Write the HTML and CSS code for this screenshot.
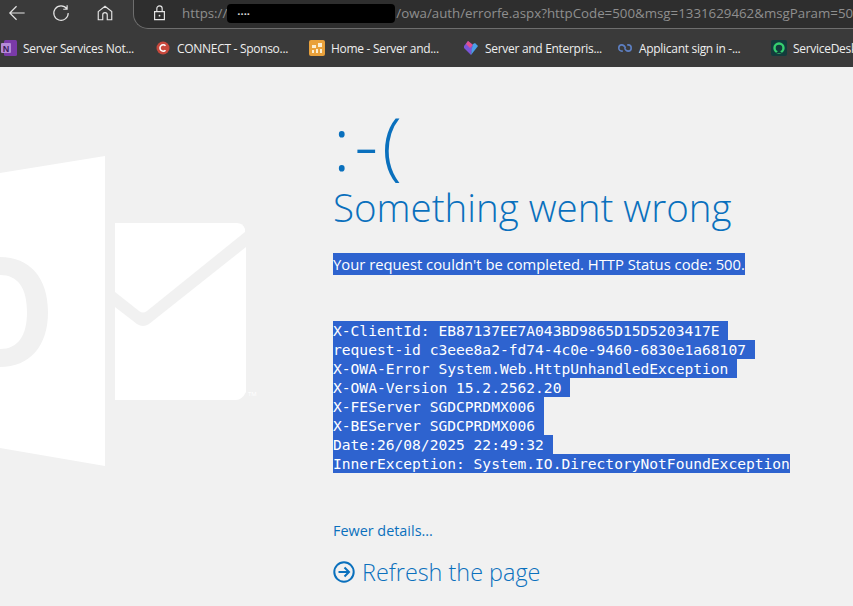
FILE: index.html
```html
<!DOCTYPE html>
<html lang="en">
<head>
<meta charset="utf-8">
<title>Something went wrong</title>
<link rel="stylesheet" href="styles.css">
</head>
<body>
<header class="chrome">
  <div class="toolbar">
    <div class="nav">
      <svg class="nav-icon" viewBox="0 0 20 20"><path d="M18.5 10H2M9.5 2.5 2 10l7.500 7.500"/></svg>
      <svg class="nav-icon" viewBox="0 0 20 20"><path d="M16.500 5.500A8 8 0 1 0 18 10M12.500 5.800h4.300V1.500"/></svg>
      <svg class="nav-icon" viewBox="0 0 20 20"><path d="M2.500 8.500 10 2.500l7.500 6v9h-5V12a2.500 2.500 0 0 0-5 0v5.500h-5z"/></svg>
    </div>
    <div class="address">
      <svg class="lock" viewBox="0 0 14 18"><path d="M1.500 7.500h11v9h-11zM4 7.500V4a3 3 0 0 1 6 0v3.500"/><circle cx="7" cy="12" r="1"/></svg>
      <span class="url-start">https://</span>
      <span class="redact">....</span>
      <span class="url-end">/owa/auth/errorfe.aspx?httpCode=500&amp;msg=1331629462&amp;msgParam=50</span>
    </div>
  </div>
  <nav class="bookmarks">
    <a class="bm"><svg class="fav" viewBox="0 0 16 16"><rect x="3" width="13" height="16" rx="1.500" fill="#7a3aa8"/><rect y="3" width="10" height="10" rx="1" fill="#b48ad6"/><text x="1.800" y="11.500" class="fav-n">N</text></svg><span>Server Services Not...</span></a>
    <a class="bm"><svg class="fav" viewBox="0 0 16 16"><circle cx="8" cy="8" r="6.500" fill="#c8483c"/><path d="M10.500 5.800a3.200 3.200 0 1 0 0 4.400" fill="none" stroke="#fff" stroke-width="1.600"/></svg><span>CONNECT - Sponso...</span></a>
    <a class="bm"><svg class="fav" viewBox="0 0 16 16"><rect width="16" height="16" rx="2" fill="#e9a13b"/><path d="M3 5h4v3H3zM9 3h4v4H9zM3 10h2v3H3zM7 9h2v4H7zM11 9h2v4h-2z" fill="#fbeed2"/></svg><span>Home - Server and...</span></a>
    <a class="bm"><svg class="fav" viewBox="0 0 16 16"><path d="M1 6 5 1l5 4-2 10-7-7z" fill="#7a55d8"/><path d="M5 1l5 4-3 3-4-4z" fill="#e0508c"/><path d="M10 4l2-1 3 3-7 9 1-7z" fill="#4aa0e8"/></svg><span>Server and Enterpris...</span></a>
    <a class="bm"><svg class="fav" viewBox="0 0 18 16"><path d="M6.500 11.500H5.500a3.500 3.500 0 0 1 0-7c2 0 3 1 4 3.500M11.500 4.500h1a3.500 3.500 0 0 1 0 7c-2 0-3-1-4-3.500" fill="none" stroke="#5d7fc2" stroke-width="1.800"/></svg><span>Applicant sign in -...</span></a>
    <a class="bm"><svg class="fav" viewBox="0 0 16 16"><rect width="16" height="16" rx="2" fill="#123c3c"/><circle cx="8" cy="8" r="4.500" fill="none" stroke="#35d06f" stroke-width="2.400"/><path d="M5 13h6l-3-3z" fill="#123c3c"/></svg><span>ServiceDesk</span></a>
  </nav>
</header>
<main class="page">
  <svg class="logo" viewBox="0 0 262 310" aria-hidden="true">
    <path fill="#fff" fill-rule="evenodd" d="M0 17 105 0V310L0 292ZM0 101V211C30 211 48 190 48 156 48 122 30 101 0 101ZM0 119C18 119 27 132 27 156 27 180 18 193 0 193Z"/>
    <path fill="#fff" d="M115 67H237Q243 67 245 73V76L147 155Q143 158 139 155L115 136Z"/>
    <path fill="#fff" d="M115 151 137 168Q143 172 149 168L246 91V236Q242 244 236 244H115Z"/>
  </svg>
  <span class="tm">TM</span>
  <section class="content">
    <div class="sad">:-(</div>
    <h1 class="title">Something went wrong</h1>
    <p class="message"><span class="sel">Your request couldn't be completed. HTTP Status code: 500.</span></p>
    <pre class="details"><span class="sel">X-ClientId: EB87137EE7A043BD9865D15D5203417E </span>
<span class="sel">request-id c3eee8a2-fd74-4c0e-9460-6830e1a68107 </span>
<span class="sel">X-OWA-Error System.Web.HttpUnhandledException </span>
<span class="sel">X-OWA-Version 15.2.2562.20 </span>
<span class="sel">X-FEServer SGDCPRDMX006 </span>
<span class="sel">X-BEServer SGDCPRDMX006 </span>
<span class="sel">Date:26/08/2025 22:49:32 </span>
<span class="sel">InnerException: System.IO.DirectoryNotFoundException</span></pre>
    <a class="fewer">Fewer details...</a>
    <a class="refresh"><svg class="refresh-icon" viewBox="0 0 22 22"><circle cx="11" cy="11" r="9.700"/><path d="M5.500 11h10M11.500 6.500 16 11l-4.500 4.500"/></svg><span>Refresh the page</span></a>
  </section>
</main>
</body>
</html>
```
FILE: styles.css
```css
* { box-sizing: border-box; }
html, body { margin: 0; height: 100%; }
body {
  width: 853px;
  height: 606px;
  overflow: hidden;
  background: #f1f1f1;
  font-family: "Open Sans", "Noto Sans", sans-serif;
  display: flex;
  flex-direction: column;
}
.chrome { background: #3a3a3a; height: 67px; flex: none; overflow: hidden; }
.toolbar { display: flex; height: 29px; }
.nav { display: flex; width: 133px; flex: none; padding-left: 8px; gap: 26px; align-items: flex-start; padding-top: 4px; }
.nav-icon { width: 18px; height: 18px; fill: none; stroke: #e4e4e4; stroke-width: 1.300; flex: none; }
.address {
  flex: 1;
  display: flex;
  align-items: center;
  height: 29px;
  padding: 0 0 2px 19px;
  background: #2e2e2e;
  border: 1px solid #6e6e6e;
  border-width: 0 0 1px 1px;
  border-radius: 0 0 0 15px;
  font-size: 13.300px;
  white-space: nowrap;
  overflow: hidden;
}
.lock { width: 13px; height: 16px; fill: none; stroke: #e8e8e8; stroke-width: 1.300; flex: none; margin-right: 16px; }
.lock circle { fill: #e8e8e8; stroke: none; }
.url-start, .url-end { color: #8f8f8f; }
.redact {
  width: 168px;
  height: 19px;
  background: #000;
  border-radius: 4px;
  color: #ddd;
  font-size: 11px;
  font-weight: 700;
  line-height: 13px;
  padding-left: 10px;
  flex: none;
}
.url-end { margin-left: 1px; }
.bookmarks { display: flex; align-items: center; height: 38px; padding-left: 1px; font-size: 12px; color: #eee; white-space: nowrap; }
.bm { display: flex; align-items: center; gap: 6px; flex: none; width: 154px; }
.bm span { letter-spacing: -0.3px; }
.fav { width: 16px; height: 16px; flex: none; }
.fav-n { font-family: "Liberation Sans", sans-serif; font-size: 9px; font-weight: 700; fill: #3a1a5a; }
.page { position: relative; flex: 1; }
.logo { position: absolute; left: 0; top: 89px; width: 262px; height: 310px; }
.tm { position: absolute; left: 248px; top: 323px; font-size: 6px; color: #fff; }
.content { position: relative; padding: 40px 0 0 333px; color: #0a70bd; }
.sad { font-size: 73px; line-height: 72px; height: 72px; font-weight: 300; letter-spacing: 4px; }
.title { margin: 6px 0 0; font-size: 38.500px; line-height: 45px; font-weight: 300; }
.message { margin: 23px 0 0; font-size: 14.800px; line-height: 22px; color: #fff; }
.sel { display: inline-block; background: #2e63cf; color: #fff; }
.details {
  margin: 46px 0 0;
  font-family: "DejaVu Sans Mono", "Liberation Mono", monospace;
  font-size: 14.600px;
  line-height: 19px;
}
.details .sel { height: 19px; vertical-align: top; }
.fewer { display: block; margin-top: 48px; font-size: 14.400px; line-height: 20px; }
.refresh { display: flex; align-items: center; gap: 7px; margin-top: 15px; font-size: 23.400px; line-height: 32px; font-weight: 300; }
.refresh-icon { width: 22px; height: 22px; fill: none; stroke: #0a70bd; stroke-width: 2; flex: none; }
```
